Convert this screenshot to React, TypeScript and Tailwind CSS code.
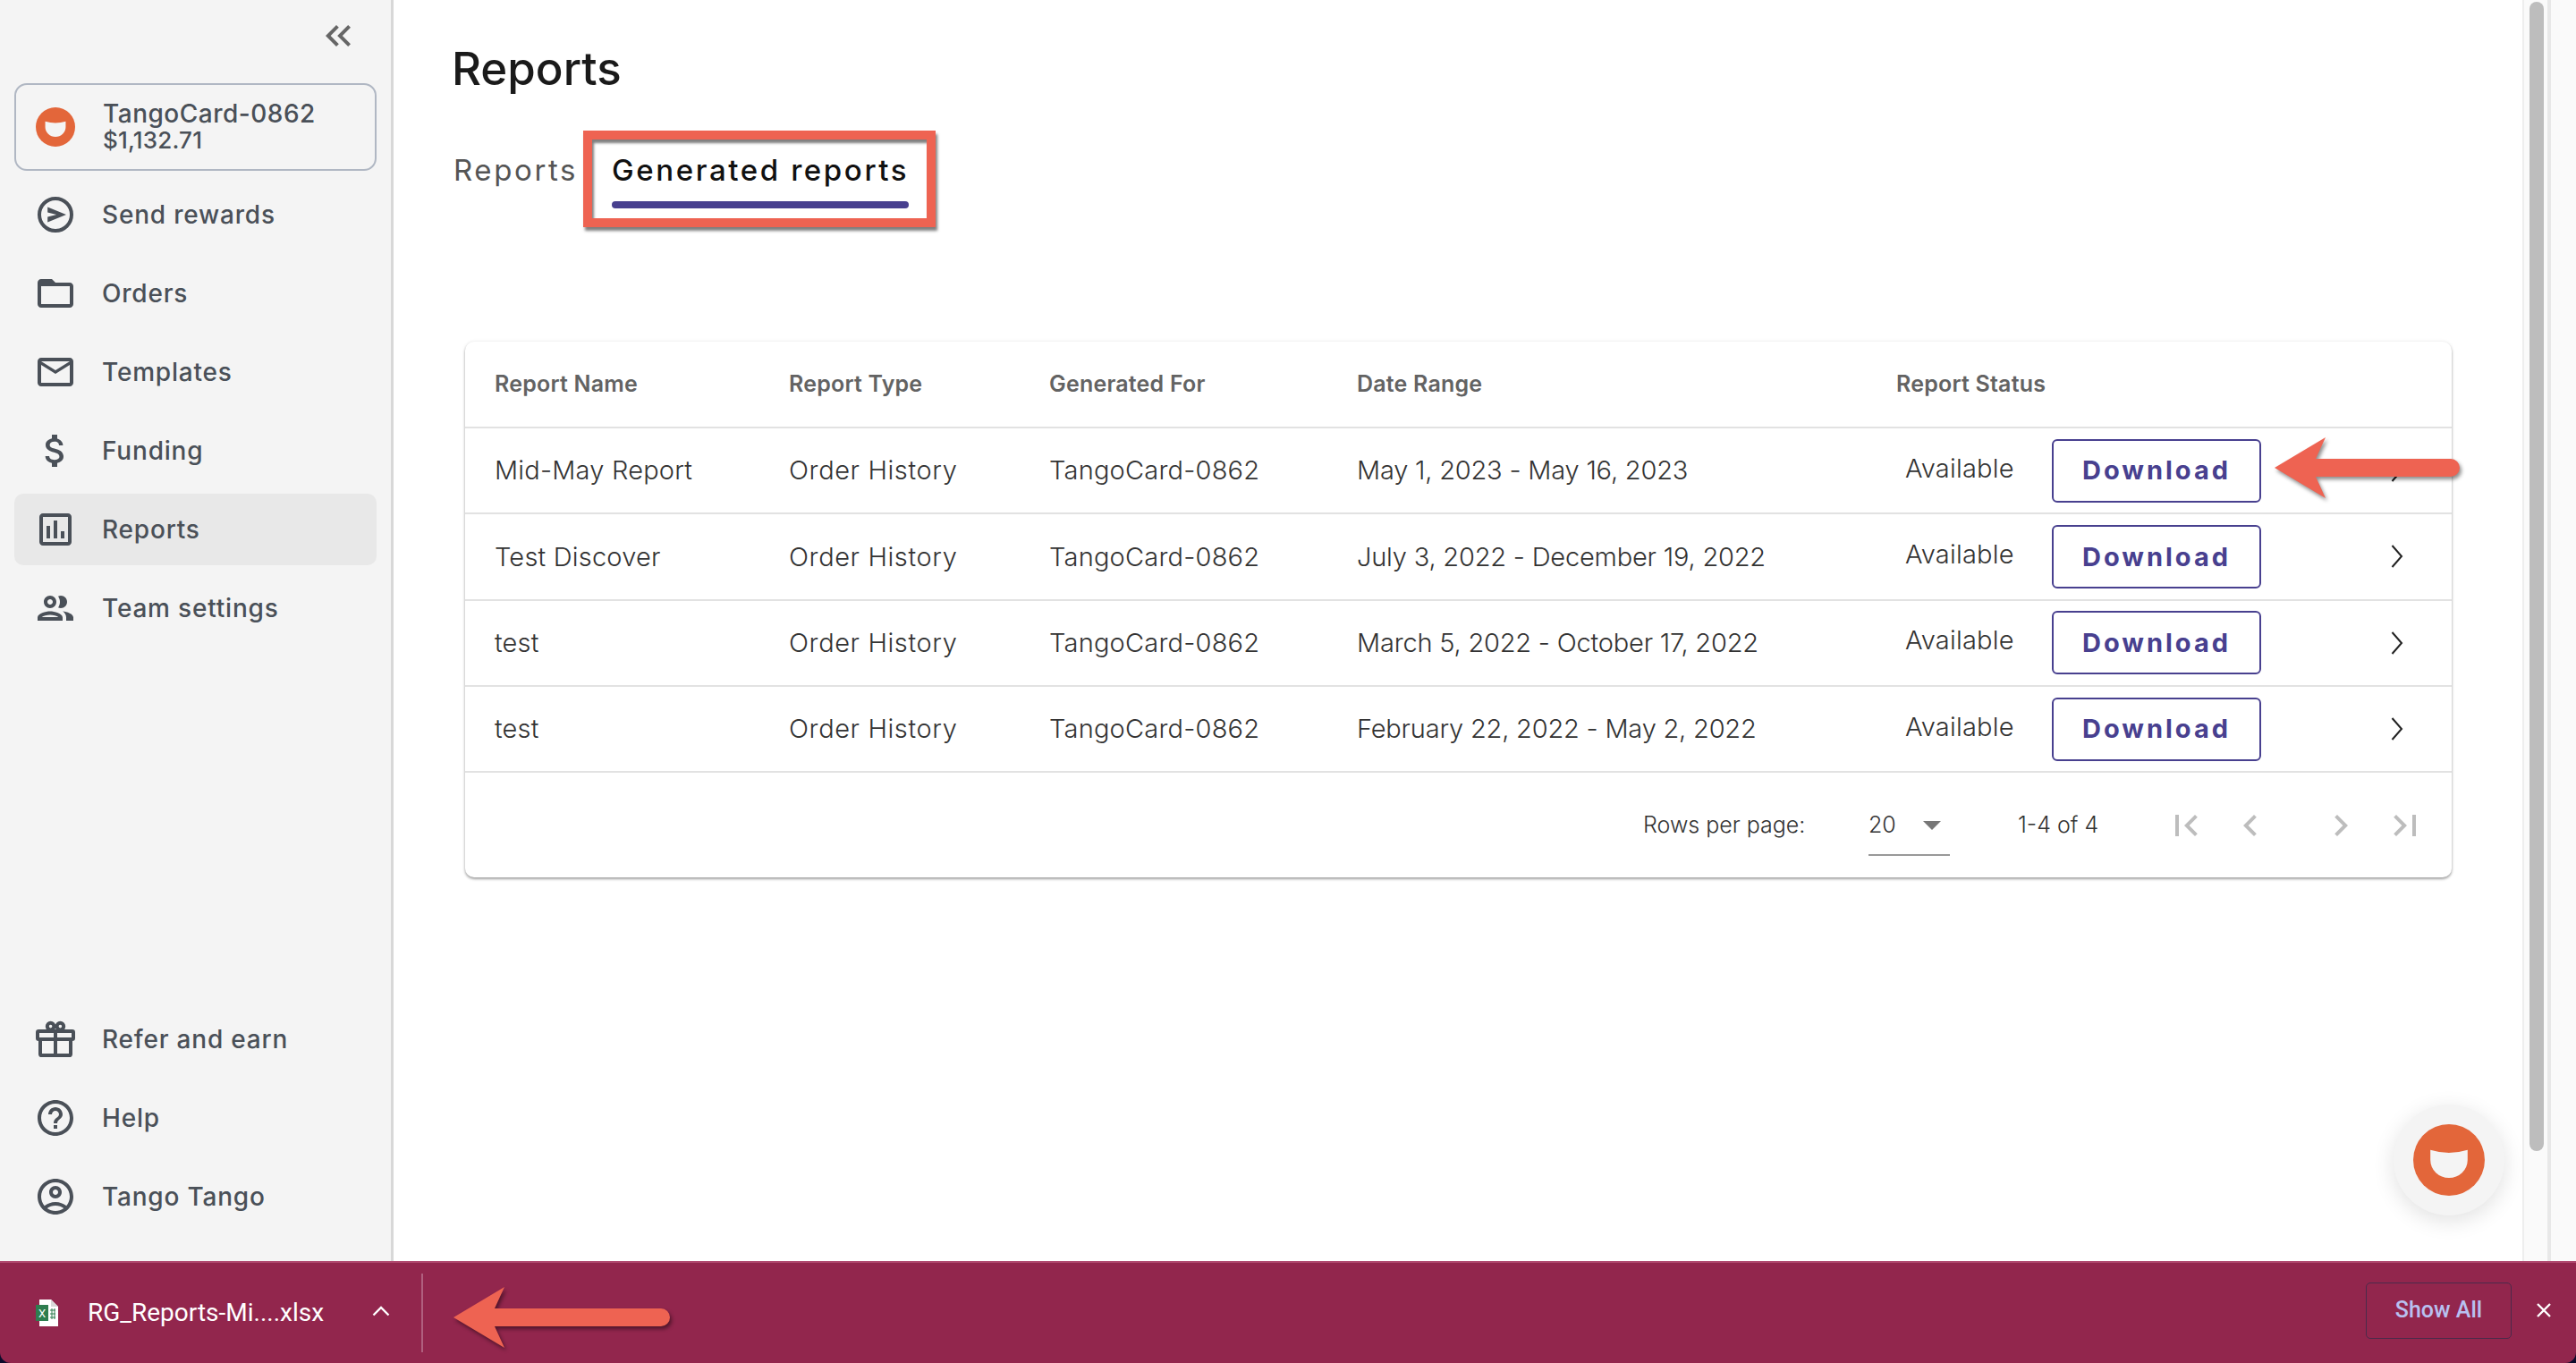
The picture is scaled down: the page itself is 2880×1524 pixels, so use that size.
const ink = '#4a5058'

function Logo({ className }: { className: string }) {
  return (
    <svg viewBox="0 0 100 100" className={className}>
      <circle cx="50" cy="50" r="50" fill="#e3663a" />
      <path d="M24 36 Q50 44 76 36 V50 A26 25 0 0 1 24 50 Z" fill="#f4f4f4" />
    </svg>
  )
}

function MuiIcon({ d, className = 'w-12 h-12', color = ink }: { d: string; className?: string; color?: string }) {
  return (
    <svg viewBox="0 0 24 24" className={className} fill={color}>
      <path d={d} />
    </svg>
  )
}

function SendIcon() {
  return (
    <svg viewBox="0 0 24 24" className="w-12 h-12" fill="none">
      <circle cx="12" cy="12" r="9" stroke={ink} strokeWidth="2" />
      <path d="M7.6 7.8 18 12 7.6 16.2 7.6 13.2 12.6 12 7.6 10.8Z" fill={ink} />
    </svg>
  )
}

function GiftIcon() {
  return (
    <svg viewBox="0 0 24 24" className="w-12 h-12" fill="none" stroke={ink} strokeWidth="2">
      <rect x="2" y="7.5" width="20" height="4.5" rx="0.6" />
      <path d="M3.5 12v8.2a.8.8 0 0 0 .8.8h15.4a.8.8 0 0 0 .8-.8V12" />
      <path d="M12 7.5V21" />
      <circle cx="9.3" cy="4.8" r="1.9" />
      <circle cx="14.7" cy="4.8" r="1.9" />
    </svg>
  )
}

const FOLDER = 'M20 6h-8l-2-2H4c-1.1 0-1.99.9-1.99 2L2 18c0 1.1.9 2 2 2h16c1.1 0 2-.9 2-2V8c0-1.1-.9-2-2-2zm0 12H4V8h16v10z'
const MAIL = 'M20 4H4c-1.1 0-1.99.9-1.99 2L2 18c0 1.1.9 2 2 2h16c1.1 0 2-.9 2-2V6c0-1.1-.9-2-2-2zm0 14H4V8l8 5 8-5v10zm-8-7L4 6h16l-8 5z'
const MONEY = 'M11.8 10.9c-2.27-.59-3-1.2-3-2.15 0-1.09 1.01-1.85 2.7-1.85 1.78 0 2.44.85 2.5 2.1h2.21c-.07-1.72-1.12-3.3-3.21-3.81V3h-3v2.16c-1.94.42-3.5 1.68-3.5 3.61 0 2.31 1.91 3.46 4.7 4.13 2.5.6 3 1.48 3 2.41 0 .69-.49 1.79-2.7 1.79-2.06 0-2.87-.92-2.98-2.1h-2.2c.12 2.19 1.76 3.42 3.68 3.83V21h3v-2.15c1.95-.37 3.5-1.5 3.5-3.55 0-2.84-2.43-3.81-4.7-4.4z'
const CHART = 'M19 3H5c-1.1 0-2 .9-2 2v14c0 1.1.9 2 2 2h14c1.1 0 2-.9 2-2V5c0-1.1-.9-2-2-2zm0 16H5V5h14v14zM7 10h2v7H7zm4-3h2v10h-2zm4 6h2v4h-2z'
const GROUP = 'M9 13.75c-2.34 0-7 1.17-7 3.5V19h14v-1.75c0-2.33-4.66-3.5-7-3.5zM4.34 17c.84-.58 2.87-1.25 4.66-1.25s3.82.67 4.66 1.25H4.34zM9 12c1.93 0 3.5-1.57 3.5-3.5S10.93 5 9 5 5.5 6.57 5.5 8.5 7.07 12 9 12zm0-5c.83 0 1.5.67 1.5 1.5S9.83 10 9 10s-1.5-.67-1.5-1.5S8.17 7 9 7zm7.04 6.81c1.16.84 1.96 1.96 1.96 3.44V19h4v-1.75c0-2.02-3.5-3.17-5.96-3.44zM15 12c1.93 0 3.5-1.57 3.5-3.5S16.93 5 15 5c-.54 0-1.04.13-1.5.35.63.89 1 1.98 1 3.15s-.37 2.26-1 3.15c.46.22.96.35 1.5.35z'
const HELP = 'M11 18h2v-2h-2v2zm1-16C6.48 2 2 6.48 2 12s4.48 10 10 10 10-4.48 10-10S17.52 2 12 2zm0 18c-4.41 0-8-3.59-8-8s3.59-8 8-8 8 3.59 8 8-3.59 8-8 8zm0-14c-2.21 0-4 1.79-4 4h2c0-1.1.9-2 2-2s2 .9 2 2c0 2-3 1.75-3 5h2c0-2.25 3-2.5 3-5 0-2.21-1.79-4-4-4z'
const ACCOUNT = 'M12 2C6.48 2 2 6.48 2 12s4.48 10 10 10 10-4.48 10-10S17.52 2 12 2zM7.35 18.5C8.66 17.56 10.26 17 12 17s3.34.56 4.65 1.5c-1.31.94-2.91 1.5-4.65 1.5s-3.34-.56-4.65-1.5zm10.79-1.38C16.45 15.8 14.32 15 12 15s-4.45.8-6.14 2.12C4.7 15.73 4 13.95 4 12c0-4.42 3.58-8 8-8s8 3.58 8 8c0 1.95-.7 3.73-1.86 5.12zM12 6c-1.93 0-3.5 1.57-3.5 3.5S10.07 13 12 13s3.5-1.57 3.5-3.5S13.93 6 12 6zm0 5c-.83 0-1.5-.67-1.5-1.5S11.17 8 12 8s1.5.67 1.5 1.5S12.83 11 12 11z'
const DOUBLE_LEFT = 'M17.59 18 19 16.59 14.42 12 19 7.41 17.59 6l-6 6zM11 18l1.41-1.41L7.83 12l4.58-4.59L11 6l-6 6z'
const FIRST = 'M18.41 16.59L13.82 12l4.59-4.59L17 6l-6 6 6 6zM6 6h2v12H6z'
const PREV = 'M15.41 7.41L14 6l-6 6 6 6 1.41-1.41L10.83 12z'
const NEXT = 'M10 6L8.59 7.41 13.17 12l-4.58 4.59L10 18l6-6z'
const LAST = 'M5.59 7.41L10.18 12l-4.59 4.59L7 18l6-6-6-6zM16 6h2v12h-2z'

function NavItem({ icon, label, active }: { icon: React.ReactNode; label: string; active?: boolean }) {
  return (
    <div className={`flex items-center h-20 rounded-[10px] ${active ? 'bg-[#e8e8e8]' : ''}`}>
      <div className="w-[92px] mr-[6px] flex justify-center shrink-0">{icon}</div>
      <span className="text-[28px] leading-none tracking-[0.8px] text-[#4a5058] font-medium">{label}</span>
    </div>
  )
}

function Sidebar() {
  return (
    <aside className="w-[440px] shrink-0 bg-[#f4f4f4] border-r-[3px] border-[#d8d8d8] flex flex-col px-4">
      <div className="h-[93px] flex justify-end">
        <div className="mt-4 mr-[19px]">
          <MuiIcon d={DOUBLE_LEFT} className="w-12 h-12" color="#666666" />
        </div>
      </div>
      <div className="h-[98px] border-2 border-[#b0b7c3] rounded-[14px] flex items-center pl-[22px]">
        <Logo className="w-11 h-11 shrink-0" />
        <div className="ml-[31px] mt-[-2px] text-[#4a5058] font-medium">
          <div className="text-[28px] leading-8 tracking-[0.5px]">TangoCard-0862</div>
          <div className="text-[26px] leading-7 tracking-[0.2px]">$1,132.71</div>
        </div>
      </div>
      <nav className="flex flex-col gap-2 mt-[9px]">
        <NavItem icon={<SendIcon />} label="Send rewards" />
        <NavItem icon={<MuiIcon d={FOLDER} />} label="Orders" />
        <NavItem icon={<MuiIcon d={MAIL} />} label="Templates" />
        <NavItem icon={<MuiIcon d={MONEY} />} label="Funding" />
        <NavItem active icon={<MuiIcon d={CHART} />} label="Reports" />
        <NavItem icon={<MuiIcon d={GROUP} />} label="Team settings" />
      </nav>
      <div className="flex flex-col gap-2 mt-auto mb-[32px]">
        <NavItem icon={<GiftIcon />} label="Refer and earn" />
        <NavItem icon={<MuiIcon d={HELP} />} label="Help" />
        <NavItem icon={<MuiIcon d={ACCOUNT} />} label="Tango Tango" />
      </div>
    </aside>
  )
}

const rows = [
  { name: 'Mid-May Report', range: 'May 1, 2023 - May 16, 2023' },
  { name: 'Test Discover', range: 'July 3, 2022 - December 19, 2022' },
  { name: 'test', range: 'March 5, 2022 - October 17, 2022' },
  { name: 'test', range: 'February 22, 2022 - May 2, 2022' },
]

const cols = 'grid grid-cols-[329px_291px_344px_603px_1fr] items-center pl-[33px] border-b-2 border-[#e2e2e2]'

function ReportsTable() {
  return (
    <div className="ml-[80px] w-[2221px] h-[599px] bg-white rounded-[10px] shadow-[0_2px_3px_rgba(0,0,0,0.35),0_0_4px_rgba(0,0,0,0.08)] flex flex-col">
      <div className={`${cols} h-[97px] text-[25px] tracking-[0.2px] font-semibold text-[#636363]`}>
        <div>Report Name</div>
        <div>Report Type</div>
        <div>Generated For</div>
        <div>Date Range</div>
        <div>Report Status</div>
      </div>
      {rows.map((r, i) => (
        <div key={i} className={`${cols} h-[96.3px] text-[29px] tracking-[0.2px] font-light text-[#333333]`}>
          <div>{r.name}</div>
          <div className="tracking-[0.6px]">Order History</div>
          <div>TangoCard-0862</div>
          <div className="tracking-[-0.2px]">{r.range}</div>
          <div className="flex items-center">
            <span className="w-[174px] pl-[10px] mt-[-5px]">Available</span>
            <button className="w-[234px] h-[71px] rounded-[6px] border-2 border-[#48408f] text-[#48408f] text-[29px] font-bold tracking-[3px]">
              Download
            </button>
            <svg viewBox="0 0 14 26" className="w-[14px] h-[26px] ml-[145px]" fill="none" stroke="#222222" strokeWidth="2">
              <path d="M1.5 1 12 13 1.5 25" />
            </svg>
          </div>
        </div>
      ))}
      <div className="flex-1 flex items-center pl-[1317px] text-[25px] font-light text-[#333333]">
        <span className="w-[252px]">Rows per page:</span>
        <div className="relative w-[91px] h-[66px] border-b-2 border-[#999999] flex items-center mt-[2px]">
          <span>20</span>
          <span className="ml-[30px] w-0 h-0 border-x-[10px] border-x-transparent border-t-[10px] border-t-[#777777]" />
        </div>
        <span className="ml-[76px] w-[164px]">1-4 of 4</span>
        <div className="flex items-center">
          <MuiIcon d={FIRST} color="#bdbdbd" />
          <MuiIcon d={PREV} color="#bdbdbd" className="w-12 h-12 ml-[24px]" />
          <MuiIcon d={NEXT} color="#bdbdbd" className="w-12 h-12 ml-[53px]" />
          <MuiIcon d={LAST} color="#bdbdbd" className="w-12 h-12 ml-[24px]" />
        </div>
      </div>
    </div>
  )
}

function Arrow({ className, long }: { className: string; long?: boolean }) {
  const end = long ? 233 : 198
  return (
    <svg
      viewBox={`0 0 ${end + 12} 72`}
      className={`absolute h-[72px] drop-shadow-[2px_3px_2px_rgba(0,0,0,0.45)] ${long ? 'w-[245px]' : 'w-[210px]'} ${className}`}
    >
      <path d={`M1 36 L58 2 L47 26 H${end} A10 10 0 0 1 ${end} 46 H47 L58 70 Z`} fill="#ee6352" />
    </svg>
  )
}

function Main() {
  return (
    <main className="flex-1 bg-white relative min-w-0">
      <h1 className="ml-[65px] mt-[50px] text-[51px] leading-[54px] font-medium text-[#1a1a1a]">Reports</h1>
      <div className="flex ml-[67px] mt-[66px] h-[100px] text-[33px] tracking-[2.6px]">
        <div className="text-[#555555] w-[177px] leading-10">Reports</div>
        <div className="flex flex-col">
          <div className="text-[#111111] leading-10 font-medium">Generated reports</div>
          <div className="h-2 mt-[15px] rounded bg-[#48408f]" />
        </div>
      </div>
      {/* red annotation box */}
      <div className="absolute left-[212px] top-[146px] w-[394px] h-[108px] border-[10px] border-[#ee6352] shadow-[2px_4px_3px_rgba(0,0,0,0.5),inset_2px_4px_3px_rgba(0,0,0,0.5)]" />
      <div className="mt-[112px]">
        <ReportsTable />
      </div>
      <Arrow className="left-[2102px] top-[487px]" />
      {/* chat button */}
      <div className="absolute left-[2236px] top-[1235px] w-[124px] h-[124px] rounded-full bg-[#f4f4f4] shadow-[0_6px_24px_rgba(0,0,0,0.12)] flex items-center justify-center">
        <Logo className="w-20 h-20" />
      </div>
    </main>
  )
}

function Scrollbar() {
  return (
    <div className="w-[60px] shrink-0 bg-[#fafafa] border-l-2 border-[#eeeeee] relative pt-[2px]">
      <div className="absolute left-[26px] top-0 bottom-0 w-1 bg-[#e8e8e8]" />
      <div className="ml-[6px] w-4 h-[1285px] bg-[#bdbdbd] rounded-full" />
    </div>
  )
}

function FileIcon() {
  return (
    <svg viewBox="0 0 26 30" className="w-[26px] h-[30px]">
      <path d="M4 0H17L25 8V30H4Z" fill="#ffffff" />
      <path d="M17 0L25 8H17Z" fill="#d8d8d8" />
      <rect x="0" y="6" width="14" height="18" fill="#2e7d4f" />
      <text x="7" y="20" fontSize="13" textAnchor="middle" fill="#ffffff" className="font-[Roboto,sans-serif]">X</text>
      <path d="M16 12h6M16 16h6M16 20h6M18 10v12M21 10v12" stroke="#2e7d4f" strokeWidth="1" />
    </svg>
  )
}

function DownloadBar() {
  return (
    <footer className="h-[114px] shrink-0 bg-[#92264d] border-t-2 border-[#b04a70] rounded-b-[12px] flex items-center relative font-[Roboto,sans-serif]">
      <div className="ml-[40px]">
        <FileIcon />
      </div>
      <span className="ml-[32px] text-[28px] text-white">RG_Reports-Mi....xlsx</span>
      <svg viewBox="0 0 20 12" className="w-5 h-3 ml-[54px] mt-[-4px]" fill="none" stroke="#ffffff" strokeWidth="2.4">
        <path d="M1.5 10.5 10 2l8.5 8.5" />
      </svg>
      <div className="w-[2px] h-[88px] bg-[#b0607f] ml-[35px]" />
      <Arrow long className="left-[506px] top-[25px]" />
      <div className="ml-auto w-[163px] h-[63px] rounded-[5px] border border-[#4a2a4a] flex items-center justify-center text-[25px] font-medium text-[#b8c0f0] mt-[-6px]">
        Show All
      </div>
      <svg viewBox="0 0 16 16" className="w-4 h-4 ml-[28px] mr-[28px] mt-[-6px]" fill="none" stroke="#ffffff" strokeWidth="2.4">
        <path d="M1 1l14 14M15 1 1 15" />
      </svg>
    </footer>
  )
}

export default function App() {
  return (
    <div className="h-screen flex flex-col overflow-hidden bg-[#0b0b2b] font-[Inter,sans-serif]">
      <div className="flex-1 flex min-h-0">
        <Sidebar />
        <Main />
        <Scrollbar />
      </div>
      <DownloadBar />
    </div>
  )
}
